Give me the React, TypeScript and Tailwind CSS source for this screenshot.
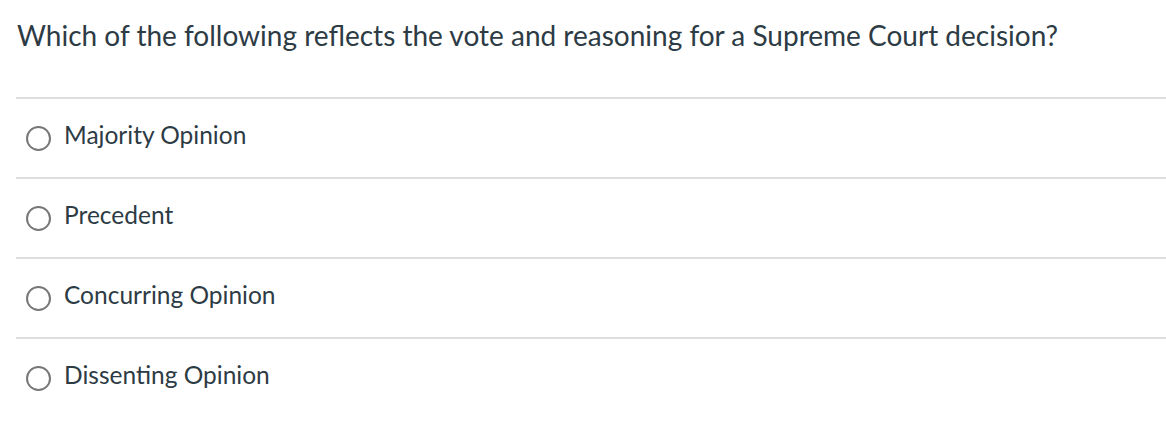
import React from "react";

const options = ["Majority Opinion", "Precedent", "Concurring Opinion", "Dissenting Opinion"];

export default function App() {
  return (
    <div className="w-[1166px] h-[434px] bg-white pl-4 text-[#2d3b45]" style={{ fontFamily: "Lato, 'Noto Sans', sans-serif" }}>
      <div className="h-[97px] pt-[13px] pl-[1px]">
        <p className="text-[28px] leading-[44px]">Which of the following reflects the vote and reasoning for a Supreme Court decision?</p>
      </div>
      {options.map((opt) => (
        <div key={opt} className="h-[80px] border-t-2 border-[#dedede] flex items-center pl-[10px] pb-[3px]">
          <span className="w-[25px] h-[25px] rounded-full border-2 border-[#777777] shrink-0 mt-[3px]" />
          <span className="ml-[13px] text-[24.5px] leading-[30px] mb-[3px]">{opt}</span>
        </div>
      ))}
    </div>
  );
}
